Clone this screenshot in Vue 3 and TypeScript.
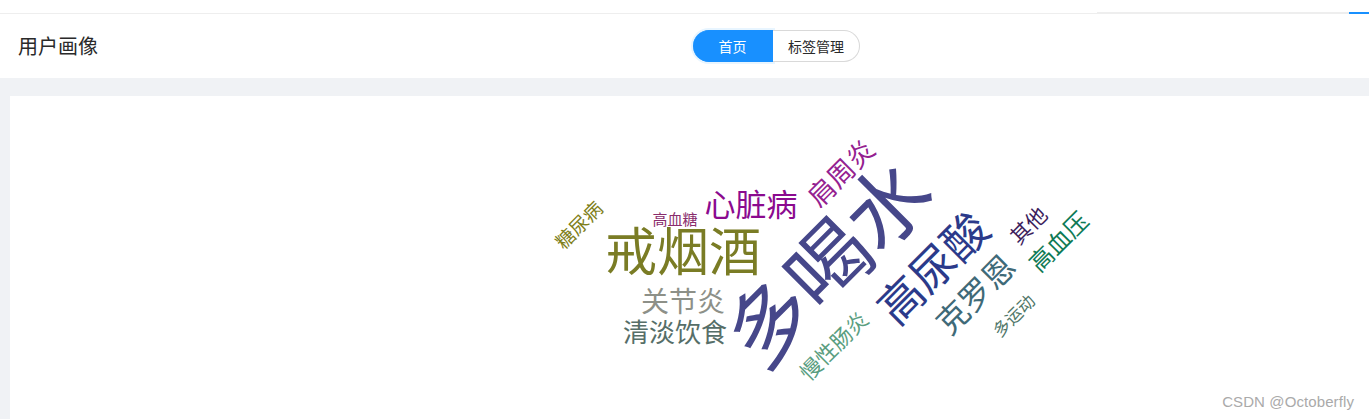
<script setup lang="ts">
interface Word { text: string; x: number; y: number; size: number; color: string; angle: number }
const words: Word[] = [
  { text: '多喝水', x: 815, y: 164, size: 83, color: '#46478a', angle: -45 },
  { text: '戒烟酒', x: 673, y: 153, size: 52, color: '#7a7c25', angle: 0 },
  { text: '心脏病', x: 741, y: 106, size: 31, color: '#8b0a8f', angle: 0 },
  { text: '关节炎', x: 673, y: 204, size: 28, color: '#8d9088', angle: 0 },
  { text: '清淡饮食', x: 665, y: 235, size: 26, color: '#566e68', angle: 0 },
  { text: '高血糖', x: 665, y: 122, size: 15, color: '#8a2c6c', angle: 0 },
  { text: '糖尿病', x: 567.5, y: 128, size: 19, color: '#7f7f1a', angle: -45 },
  { text: '肩周炎', x: 830, y: 76, size: 27, color: '#942090', angle: -45 },
  { text: '高尿酸', x: 920.5, y: 170, size: 45, color: '#2b3a8a', angle: -45 },
  { text: '克罗恩', x: 964, y: 197, size: 32, color: '#3f6a78', angle: -45 },
  { text: '其他', x: 1018, y: 129, size: 21, color: '#3d1d5c', angle: -45 },
  { text: '高血压', x: 1048, y: 145, size: 24, color: '#0f7a55', angle: -45 },
  { text: '多运动', x: 1003, y: 219, size: 17, color: '#4f7668', angle: -45 },
  { text: '慢性肠炎', x: 823, y: 249, size: 21.5, color: '#5a9e80', angle: -45 },
]
const wordStyle = (w: Word) => ({
  left: `${w.x}px`,
  top: `${w.y}px`,
  fontSize: `${w.size}px`,
  color: w.color,
  transform: `translate(-50%, -50%) rotate(${w.angle}deg)`,
})
</script>

<template>
  <div class="page">
    <div class="topbar">
      <div class="tab-line"></div>
      <div class="tab-active"></div>
    </div>
    <header class="header">
      <h1 class="title">用户画像</h1>
      <div class="segments">
        <span class="seg active">首页</span>
        <span class="seg">标签管理</span>
      </div>
    </header>
    <main class="body">
      <section class="card">
        <span v-for="w in words" :key="w.text" class="word" :style="wordStyle(w)">{{ w.text }}</span>
      </section>
    </main>
    <div class="mark">CSDN @Octoberfly</div>
  </div>
</template>

<style>
html, body { margin: 0; overflow: hidden; background: #fff; }
</style>

<style scoped>
.page {
  position: relative;
  width: 1369px;
  height: 419px;
  overflow: hidden;
  display: flex;
  flex-direction: column;
  font-family: "Noto Sans CJK SC", "Liberation Sans", sans-serif;
}
.topbar {
  height: 14px;
  flex: none;
  box-sizing: border-box;
  border-bottom: 1px solid #eeeeee;
  display: flex;
  justify-content: flex-end;
  align-items: flex-end;
}
.tab-line { width: 252px; height: 2px; background: #eeeeee; margin-bottom: -1px; }
.tab-active { width: 20px; height: 2px; background: #1890ff; margin-bottom: -1px; }
.header {
  height: 64px;
  flex: none;
  display: flex;
  align-items: center;
  padding: 0 0 0 18px;
  background: #fff;
}
.title {
  margin: 0;
  width: 675px;
  font-size: 20px;
  line-height: 28px;
  font-weight: 400;
  color: #2a2a2a;
}
.segments {
  display: flex;
  height: 32px;
  width: 167px;
  box-sizing: border-box;
  font-size: 14px;
  border-radius: 16px;
}
.seg {
  display: flex;
  align-items: center;
  justify-content: center;
  flex: 1;
  box-sizing: border-box;
  border: 1px solid #d9d9d9;
  border-left: none;
  border-radius: 0 16px 16px 0;
  color: #2a2a2a;
  background: #fff;
}
.seg.active {
  flex: none;
  width: 80px;
  background: #1890ff;
  border-color: #1890ff;
  color: #fff;
  border-radius: 16px 0 0 16px;
  box-shadow: 0 0 0 2px #e8f5ff;
}
.body {
  flex: 1;
  background: #f0f2f5;
  padding: 18px 0 0 10px;
  min-height: 0;
}
.card {
  position: relative;
  height: 100%;
  background: #fff;
}
.word {
  position: absolute;
  white-space: nowrap;
  line-height: 1;
}
.mark {
  position: absolute;
  right: 15px;
  bottom: 7px;
  font-family: "Liberation Sans", sans-serif;
  font-size: 15px;
  line-height: 20px;
  letter-spacing: 0.1px;
  color: #aaaaaa;
}
</style>
